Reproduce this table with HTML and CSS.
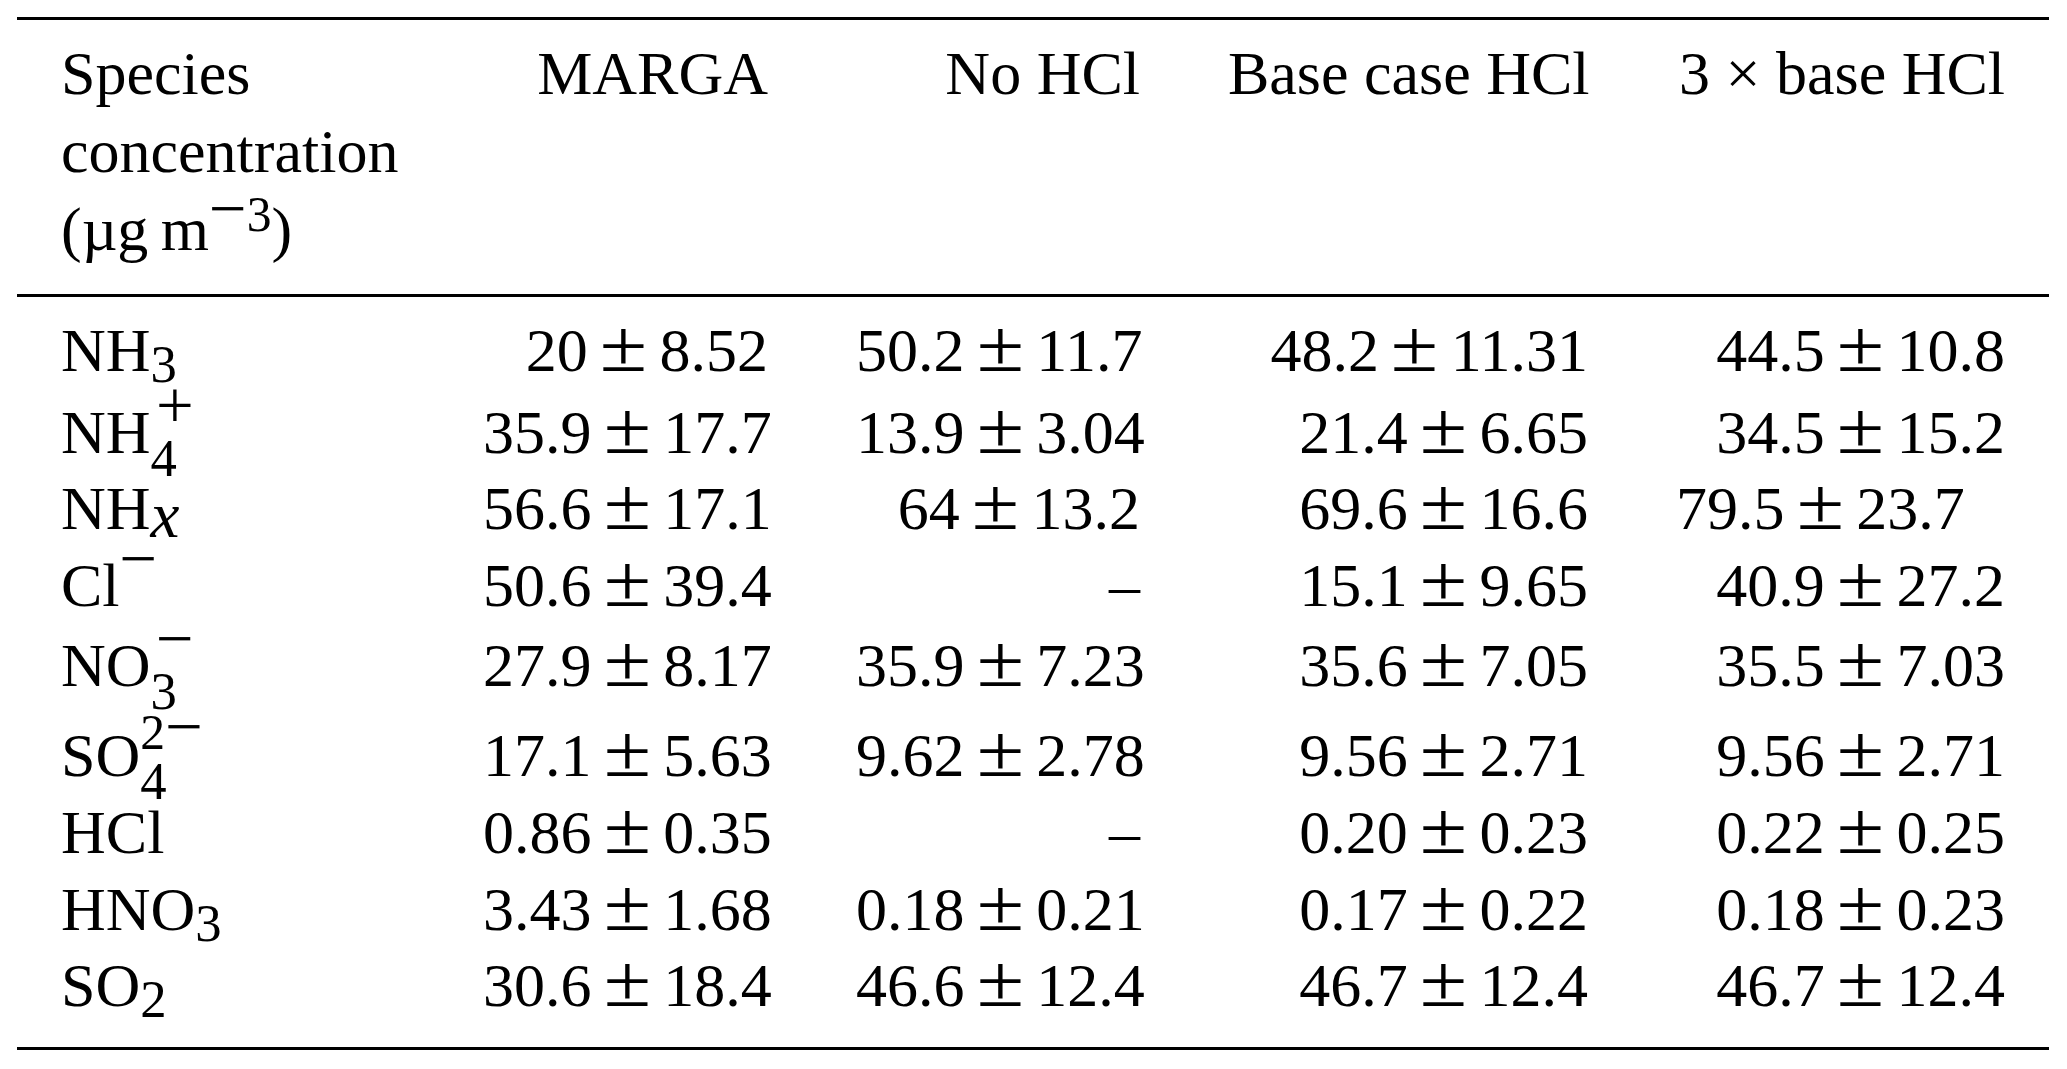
FILE: index.html
```html
<!DOCTYPE html>
<html lang="en">
<head>
<meta charset="utf-8">
<title>Species concentration table</title>
<link rel="stylesheet" href="styles.css">
</head>
<body>
<div class="page">
  <div class="tbl">
    <div class="row head">
      <div class="cell first">Species<br>concentration<br>(µg&#8201;m<span class="sup sup-unit"><span class="sgn">−</span>3</span>)</div>
      <div class="cell">MARGA</div>
      <div class="cell">No HCl</div>
      <div class="cell">Base case HCl</div>
      <div class="cell">3 × base HCl</div>
    </div>
    <div class="body">
      <div class="row">
        <div class="cell first">NH<span class="sub">3</span></div>
        <div class="cell">20 <span class="pm">±</span> 8.52</div>
        <div class="cell">50.2 <span class="pm">±</span> 11.7</div>
        <div class="cell">48.2 <span class="pm">±</span> 11.31</div>
        <div class="cell">44.5 <span class="pm">±</span> 10.8</div>
      </div>
      <div class="row r-plus">
        <div class="cell first">NH<span class="sub sub-low">4</span><span class="sup pair"><span class="sgn">+</span></span></div>
        <div class="cell">35.9 <span class="pm">±</span> 17.7</div>
        <div class="cell">13.9 <span class="pm">±</span> 3.04</div>
        <div class="cell">21.4 <span class="pm">±</span> 6.65</div>
        <div class="cell">34.5 <span class="pm">±</span> 15.2</div>
      </div>
      <div class="row">
        <div class="cell first">NH<span class="sub sub-x">x</span></div>
        <div class="cell">56.6 <span class="pm">±</span> 17.1</div>
        <div class="cell">64 <span class="pm">±</span> 13.2</div>
        <div class="cell">69.6 <span class="pm">±</span> 16.6</div>
        <div class="cell left">79.5 <span class="pm">±</span> 23.7</div>
      </div>
      <div class="row">
        <div class="cell first">Cl<span class="sup"><span class="sgn">−</span></span></div>
        <div class="cell">50.6 <span class="pm">±</span> 39.4</div>
        <div class="cell">–</div>
        <div class="cell">15.1 <span class="pm">±</span> 9.65</div>
        <div class="cell">40.9 <span class="pm">±</span> 27.2</div>
      </div>
      <div class="row r-minus">
        <div class="cell first">NO<span class="sub sub-low">3</span><span class="sup pair"><span class="sgn">−</span></span></div>
        <div class="cell">27.9 <span class="pm">±</span> 8.17</div>
        <div class="cell">35.9 <span class="pm">±</span> 7.23</div>
        <div class="cell">35.6 <span class="pm">±</span> 7.05</div>
        <div class="cell">35.5 <span class="pm">±</span> 7.03</div>
      </div>
      <div class="row r-sulf">
        <div class="cell first">SO<span class="sub sub-low">4</span><span class="sup sup-hi pair-full">2<span class="sgn">−</span></span></div>
        <div class="cell">17.1 <span class="pm">±</span> 5.63</div>
        <div class="cell">9.62 <span class="pm">±</span> 2.78</div>
        <div class="cell">9.56 <span class="pm">±</span> 2.71</div>
        <div class="cell">9.56 <span class="pm">±</span> 2.71</div>
      </div>
      <div class="row">
        <div class="cell first">HCl</div>
        <div class="cell">0.86 <span class="pm">±</span> 0.35</div>
        <div class="cell">–</div>
        <div class="cell">0.20 <span class="pm">±</span> 0.23</div>
        <div class="cell">0.22 <span class="pm">±</span> 0.25</div>
      </div>
      <div class="row">
        <div class="cell first">HNO<span class="sub">3</span></div>
        <div class="cell">3.43 <span class="pm">±</span> 1.68</div>
        <div class="cell">0.18 <span class="pm">±</span> 0.21</div>
        <div class="cell">0.17 <span class="pm">±</span> 0.22</div>
        <div class="cell">0.18 <span class="pm">±</span> 0.23</div>
      </div>
      <div class="row">
        <div class="cell first">SO<span class="sub">2</span></div>
        <div class="cell">30.6 <span class="pm">±</span> 18.4</div>
        <div class="cell">46.6 <span class="pm">±</span> 12.4</div>
        <div class="cell">46.7 <span class="pm">±</span> 12.4</div>
        <div class="cell">46.7 <span class="pm">±</span> 12.4</div>
      </div>
    </div>
  </div>
</div>
</body>
</html>
```

FILE: styles.css
```css
html, body {
  margin: 0;
  padding: 0;
  background: #ffffff;
}

body {
  font-family: "Liberation Serif", "Times New Roman", serif;
  font-size: 62px;
  color: #000000;
}

.page {
  padding: 17px 0 0 17px;
}

.tbl {
  width: 2032px;
  border-top: 3px solid #000000;
  border-bottom: 3px solid #000000;
}

.row {
  display: grid;
  grid-template-columns: 422px 373px 372px 448px 417px;
  line-height: 76.6px;
}

.cell {
  padding: 0 44px;
  text-align: right;
  white-space: nowrap;
}

.cell.first {
  text-align: left;
  padding-right: 0;
}

.cell.left {
  text-align: left;
}

.head {
  line-height: 78px;
  padding: 14.4px 0 25.6px;
  border-bottom: 3px solid #000000;
}

.body {
  padding: 15.5px 0 23.6px;
}

.r-plus {
  padding-top: 4.7px;
}

.r-minus {
  padding-top: 3.9px;
}

.r-sulf {
  padding-top: 13.4px;
}

/* plus-minus sign, wider like the math font */
.pm {
  display: inline-block;
  font-size: 1.2em;
  line-height: 0;
  transform: scaleX(1.16);
}

/* subscripts */
.sub {
  font-size: 0.85em;
  line-height: 0;
  vertical-align: -11px;
}

.sub-low {
  vertical-align: -23px;
}

.sub-x {
  font-style: italic;
  font-size: 1.05em;
  vertical-align: -8px;
}

/* superscripts */
.sup {
  font-size: 0.8em;
  line-height: 0;
  vertical-align: 25px;
}

.sup .sgn {
  font-size: 1.35em;
}

.sup-unit {
  vertical-align: 19.5px;
}

.sup-hi {
  vertical-align: 27.5px;
}

.pair {
  margin-left: -0.42em;
}

.pair-full {
  margin-left: -0.53em;
}
```
